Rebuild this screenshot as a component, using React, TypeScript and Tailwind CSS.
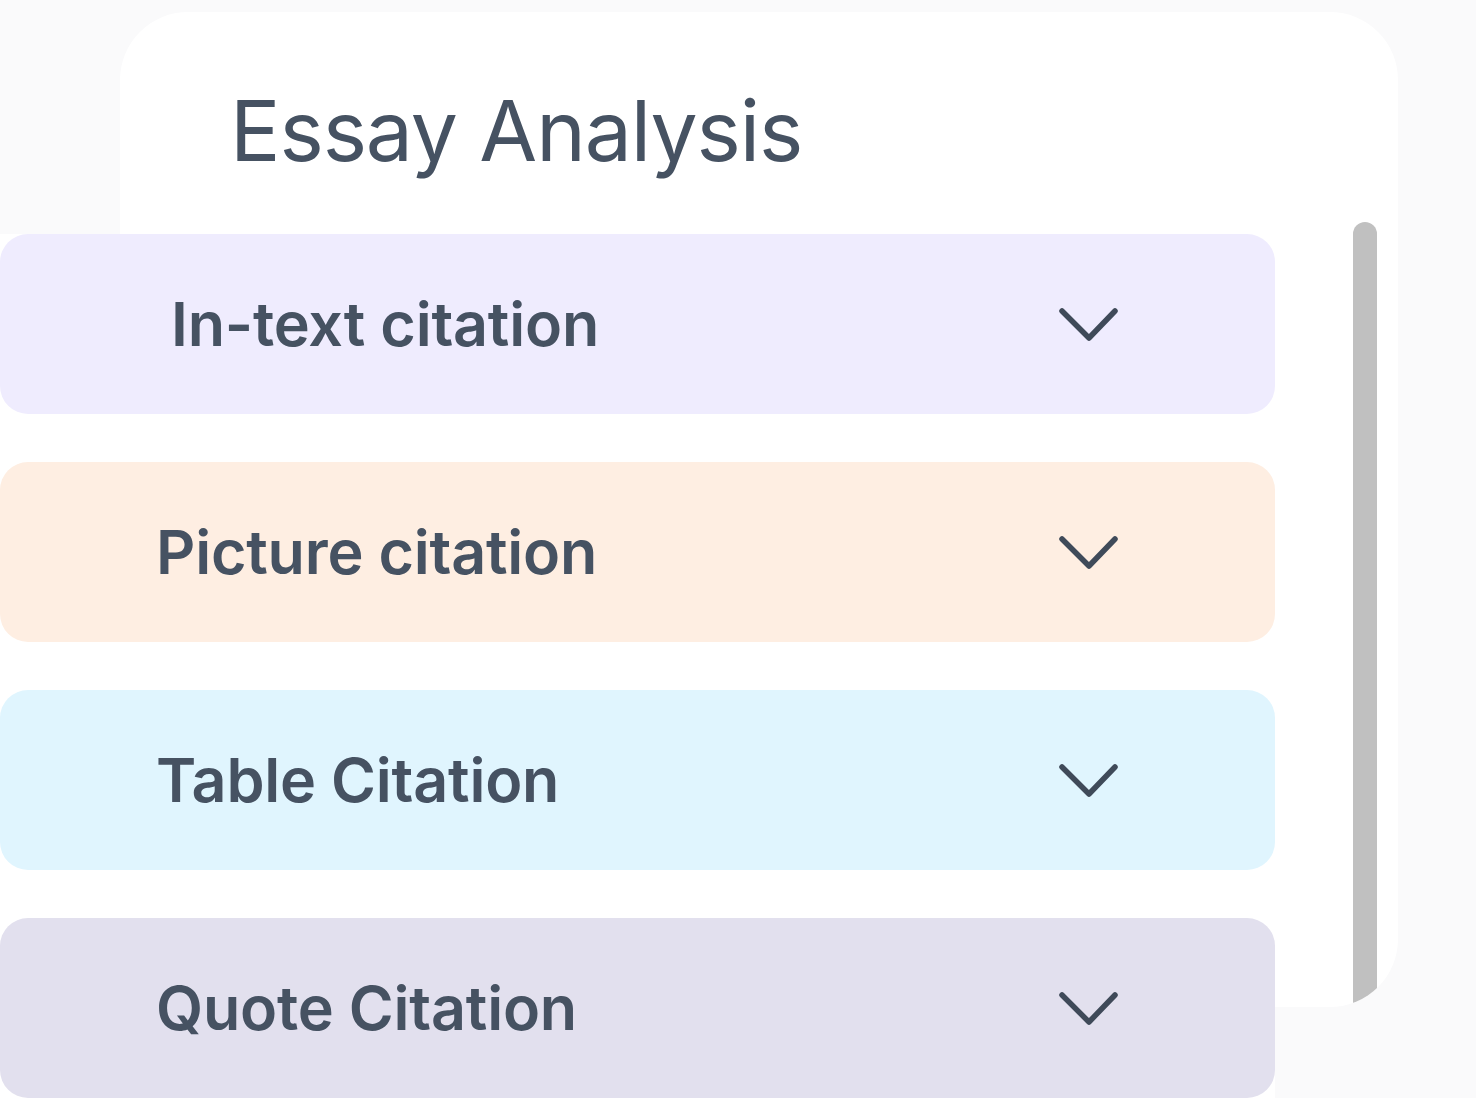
import { ReactNode } from "react";

const ROWS = [
  { label: "In-text citation", bg: "bg-[#efecfe]", pad: "pl-[171px]" },
  { label: "Picture citation", bg: "bg-[#feeee2]", pad: "pl-[156px]" },
  { label: "Table Citation", bg: "bg-[#e0f5fe]", pad: "pl-[156px]" },
  { label: "Quote Citation", bg: "bg-[#e2e0ee]", pad: "pl-[156px]" },
];

function Chevron() {
  return (
    <svg width="59" height="33" viewBox="0 0 59 33" fill="none" className="shrink-0">
      <polyline
        points="3,3 30,30 56,3"
        stroke="#3f4a59"
        strokeWidth="5.5"
        strokeLinecap="round"
        strokeLinejoin="round"
      />
    </svg>
  );
}

function Row({ label, bg, pad }: { label: ReactNode; bg: string; pad: string }) {
  return (
    <button
      className={`flex h-[180px] w-[1275px] items-center justify-between rounded-[28px] pr-[157px] text-left ${bg} ${pad}`}
    >
      <span className="text-[61px] font-semibold leading-none tracking-[-0.2px] text-[#465262]">{label}</span>
      <Chevron />
    </button>
  );
}

export default function App() {
  return (
    <div
      className="h-[1098px] w-full overflow-hidden bg-[#fafafb] pt-[12px]"
      style={{ fontFamily: "Inter, 'Noto Sans', sans-serif" }}
    >
      <div className="relative ml-[120px] h-[995px] w-[1278px] rounded-[68px] bg-white">
        {/* scroll track, clipped by the card corners */}
        <div className="pointer-events-none absolute inset-0 overflow-hidden rounded-[68px]">
          <div className="absolute bottom-0 left-[1233px] top-[210px] w-[24px] rounded-t-full bg-[#c0c0c0]" />
        </div>

        <h1 className="pl-[110px] pt-[77px] text-[84px] font-normal leading-none tracking-[-1.1px] text-[#465262]">
          Essay Analysis
        </h1>

        <div className="relative -ml-[120px] mt-[61px] flex w-[1275px] flex-col gap-[48px] bg-white">
          {ROWS.map((row) => (
            <Row key={row.label} label={row.label} bg={row.bg} pad={row.pad} />
          ))}
        </div>
      </div>
    </div>
  );
}
